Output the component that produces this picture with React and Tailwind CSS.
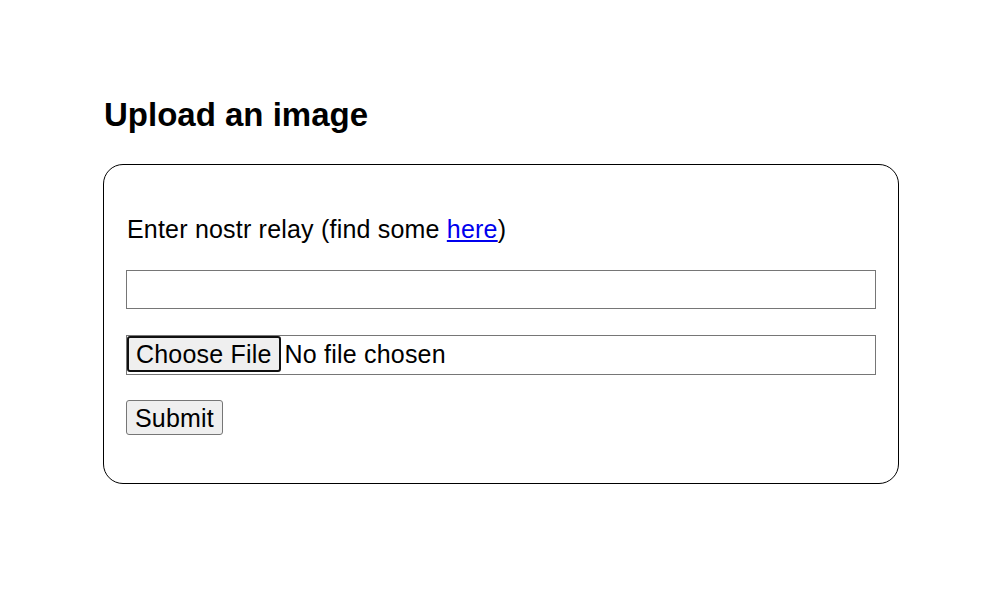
export default function App() {
  return (
    <div className="min-h-screen bg-white text-black font-['Liberation_Sans',Arial,sans-serif]">
      <div className="ml-[103px] w-[796px] pt-[97px]">
        {/* Title */}
        <h1 className="text-[33px] font-bold leading-[36px] pl-[1px]">Upload an image</h1>

        {/* Upload Card */}
        <form className="mt-[31px] border border-black rounded-[20px] px-[22px] pt-[50px] pb-[48px] flex flex-col">
          <p className="text-[25px] leading-[28px] tracking-[0.2px] pl-[1px]">
            Enter nostr relay (find some{" "}
            <a href="#" className="text-[#0000ee] underline">
              here
            </a>
            )
          </p>

          <input
            type="text"
            name="relay"
            className="mt-[27px] h-[39px] w-full border border-[#767676] px-[4px] text-[25px] outline-none"
          />

          <input
            type="file"
            name="img"
            accept="image/*"
            className="mt-[26px] h-[40px] w-full border border-[#767676] text-[25px] leading-[28px] tracking-[0.2px] file:h-[36px] file:px-[7px] file:mr-[4px] file:border-2 file:border-[#101010] file:rounded-[3px] file:bg-[#efefef]"
          />

          <div className="mt-[25px]">
            <button
              type="button"
              className="h-[35px] px-[8px] text-[25px] leading-[28px] tracking-[0.2px] bg-[#efefef] border border-[#767676] rounded-[3px]"
            >
              Submit
            </button>
          </div>
        </form>
      </div>
    </div>
  );
}
